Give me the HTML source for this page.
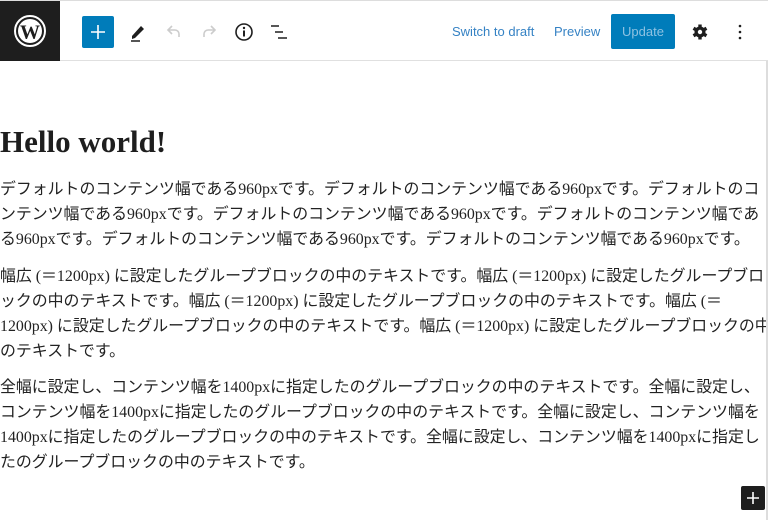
<!DOCTYPE html>
<html><head><meta charset="utf-8"><style>
*{margin:0;padding:0;box-sizing:border-box}
body{width:768px;height:520px;overflow:hidden;background:#fff;position:relative;font-family:"Liberation Serif","Noto Sans CJK JP",serif;color:#1e1e1e}
.hdr{position:absolute;left:0;top:0;width:768px;height:61px;border-bottom:1px solid #e0e0e0;border-top:1px solid #ddd}
.logo{position:absolute;left:0;top:0;width:60px;height:60px;background:#1e1e1e}
.plus{position:absolute;left:82px;top:15px;width:32px;height:32px;background:#007cba;border-radius:2px}
.ui{font-family:"Liberation Sans",sans-serif;font-size:13px;position:absolute;top:23px;color:#3582c4}
.upd{position:absolute;left:611px;top:13px;width:64px;height:35px;background:#007cba;border-radius:2px;color:#8ec2e2;font-family:"Liberation Sans",sans-serif;font-size:13px;text-align:center;line-height:35px}
h1{position:absolute;left:0;top:124px;font-size:31px;font-weight:bold;line-height:36px;font-family:"Liberation Serif",serif}
.p{position:absolute;left:0;font-size:15.9px;white-space:nowrap;color:#222}
.p div{height:25px;line-height:25px}
.rb{position:absolute;right:0;top:61px;width:2px;height:459px;background:#ddd}
.bp{position:absolute;left:741px;top:486px;width:24px;height:24px;background:#1e1e1e;border-radius:2px}
</style></head><body>
<div class="hdr">
<div class="logo"><svg width="60" height="60" viewBox="0 0 60 60"><circle cx="30" cy="30" r="15" fill="none" stroke="#fff" stroke-width="2"/><circle cx="30" cy="30" r="12" fill="#fff"/><text x="30" y="37.5" text-anchor="middle" font-family="Liberation Serif" font-weight="bold" font-size="20" fill="#1e1e1e">W</text></svg></div>
<div class="plus"><svg width="32" height="32"><path d="M16 9v14M9 16h14" stroke="#fff" stroke-width="1.6"/></svg></div>
<svg style="position:absolute;left:128px;top:20px" width="20" height="22"><path d="M4 15l9-10 3 3-9 9-3 1z" fill="#1e1e1e"/><path d="M3 20h9" stroke="#1e1e1e" stroke-width="1.5"/></svg>
<svg style="position:absolute;left:164px;top:21px" width="20" height="20"><path d="M15 15v-3a4 4 0 0 0-4-4H4M8 4L4 8l4 4" fill="none" stroke="#ccc" stroke-width="1.6"/></svg>
<svg style="position:absolute;left:199px;top:21px" width="20" height="20"><path d="M5 15v-3a4 4 0 0 1 4-4h7M12 4l4 4-4 4" fill="none" stroke="#ccc" stroke-width="1.6"/></svg>
<svg style="position:absolute;left:233px;top:20px" width="22" height="22"><circle cx="11" cy="11" r="8" fill="none" stroke="#1e1e1e" stroke-width="1.6"/><path d="M11 9.5v6" stroke="#1e1e1e" stroke-width="2"/><circle cx="11" cy="7" r="1.2" fill="#1e1e1e"/></svg>
<svg style="position:absolute;left:269px;top:21px" width="22" height="20"><path d="M2 4h8M6 10h8M9 16h9" stroke="#1e1e1e" stroke-width="1.6"/></svg>
<div class="ui" style="left:452px">Switch to draft</div>
<div class="ui" style="left:554px">Preview</div>
<div class="upd">Update</div>
<svg style="position:absolute;left:690px;top:21px" width="20" height="20" viewBox="0 0 20 20"><g fill="#1e1e1e"><circle cx="10" cy="10" r="5.5"/><rect x="8.3" y="2.5" width="3.4" height="15"/><rect x="8.3" y="2.5" width="3.4" height="15" transform="rotate(60 10 10)"/><rect x="8.3" y="2.5" width="3.4" height="15" transform="rotate(120 10 10)"/></g><circle cx="10" cy="10" r="2.2" fill="#fff"/></svg>
<svg style="position:absolute;left:734px;top:21px" width="12" height="20"><circle cx="6" cy="4" r="1.3" fill="#1e1e1e"/><circle cx="6" cy="10" r="1.3" fill="#1e1e1e"/><circle cx="6" cy="16" r="1.3" fill="#1e1e1e"/></svg>
</div>
<h1>Hello world!</h1>
<div class="p" style="top:177px">
<div>デフォルトのコンテンツ幅である960pxです。デフォルトのコンテンツ幅である960pxです。デフォルトのコ</div>
<div>ンテンツ幅である960pxです。デフォルトのコンテンツ幅である960pxです。デフォルトのコンテンツ幅であ</div>
<div>る960pxです。デフォルトのコンテンツ幅である960pxです。デフォルトのコンテンツ幅である960pxです。</div>
</div>
<div class="p" style="top:264px">
<div>幅広 (＝1200px) に設定したグループブロックの中のテキストです。幅広 (＝1200px) に設定したグループブロ</div>
<div>ックの中のテキストです。幅広 (＝1200px) に設定したグループブロックの中のテキストです。幅広 (＝</div>
<div>1200px) に設定したグループブロックの中のテキストです。幅広 (＝1200px) に設定したグループブロックの中</div>
<div>のテキストです。</div>
</div>
<div class="p" style="top:375px">
<div>全幅に設定し、コンテンツ幅を1400pxに指定したのグループブロックの中のテキストです。全幅に設定し、</div>
<div>コンテンツ幅を1400pxに指定したのグループブロックの中のテキストです。全幅に設定し、コンテンツ幅を</div>
<div>1400pxに指定したのグループブロックの中のテキストです。全幅に設定し、コンテンツ幅を1400pxに指定し</div>
<div>たのグループブロックの中のテキストです。</div>
</div>
<div class="rb"></div>
<div class="bp"><svg width="24" height="24"><path d="M12 6v12M6 12h12" stroke="#fff" stroke-width="1.6"/></svg></div>
</body></html>
